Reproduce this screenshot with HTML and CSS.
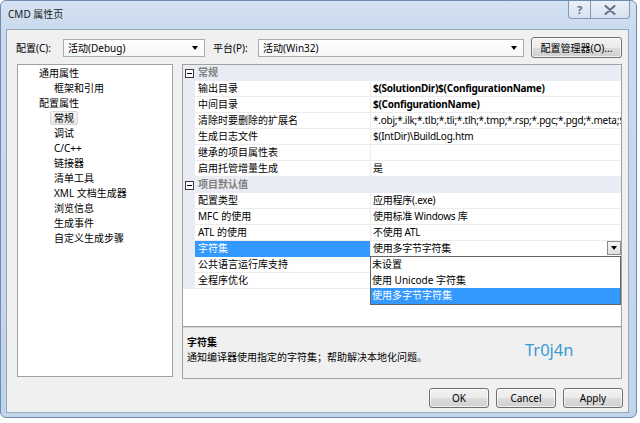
FILE: index.html
```html
<!DOCTYPE html>
<html lang="zh-CN">
<head>
<meta charset="utf-8">
<title>CMD 属性页</title>
<link rel="stylesheet" href="styles.css">
</head>
<body>
<div class="window">
  <div class="titlebar">
    <span class="title">CMD 属性页</span>
    <div class="caption-btns">
      <div class="cap cap-help">?</div>
      <div class="cap cap-close">
        <svg width="12" height="10" viewBox="0 0 12 10"><path d="M1.5 1 L10.5 9 M10.5 1 L1.5 9" stroke="#5f7088" stroke-width="2" fill="none" stroke-linecap="round"/></svg>
      </div>
    </div>
  </div>
  <div class="client">
    <div class="config-row">
      <span class="lbl lbl-cfg">配置(C):</span>
      <div class="combo combo-cfg"><span>活动(Debug)</span><span class="arrow"></span></div>
      <span class="lbl lbl-plat">平台(P):</span>
      <div class="combo combo-plat"><span>活动(Win32)</span><span class="arrow"></span></div>
      <div class="btn btn-mgr">配置管理器(O)...</div>
    </div>
    <div class="main">
      <div class="tree">
        <div class="ti l0">通用属性</div>
        <div class="ti l1">框架和引用</div>
        <div class="ti l0">配置属性</div>
        <div class="ti l1"><span class="tsel">常规</span></div>
        <div class="ti l1">调试</div>
        <div class="ti l1">C/C++</div>
        <div class="ti l1">链接器</div>
        <div class="ti l1">清单工具</div>
        <div class="ti l1">XML 文档生成器</div>
        <div class="ti l1">浏览信息</div>
        <div class="ti l1">生成事件</div>
        <div class="ti l1">自定义生成步骤</div>
      </div>
      <div class="panel">
        <div class="grid">
          <div class="row cat"><span class="gut"><span class="minus"></span></span><span class="cat-label">常规</span></div>
          <div class="row"><span class="gut"></span><span class="name">输出目录</span><span class="val bold">$(SolutionDir)$(ConfigurationName)</span></div>
          <div class="row"><span class="gut"></span><span class="name">中间目录</span><span class="val bold">$(ConfigurationName)</span></div>
          <div class="row"><span class="gut"></span><span class="name">清除时要删除的扩展名</span><span class="val">*.obj;*.ilk;*.tlb;*.tli;*.tlh;*.tmp;*.rsp;*.pgc;*.pgd;*.meta;$(</span></div>
          <div class="row"><span class="gut"></span><span class="name">生成日志文件</span><span class="val">$(IntDir)\BuildLog.htm</span></div>
          <div class="row"><span class="gut"></span><span class="name">继承的项目属性表</span><span class="val"></span></div>
          <div class="row"><span class="gut"></span><span class="name">启用托管增量生成</span><span class="val">是</span></div>
          <div class="row cat"><span class="gut"><span class="minus"></span></span><span class="cat-label">项目默认值</span></div>
          <div class="row"><span class="gut"></span><span class="name">配置类型</span><span class="val">应用程序(.exe)</span></div>
          <div class="row"><span class="gut"></span><span class="name">MFC 的使用</span><span class="val">使用标准 Windows 库</span></div>
          <div class="row"><span class="gut"></span><span class="name">ATL 的使用</span><span class="val">不使用 ATL</span></div>
          <div class="row row-sel"><span class="gut"></span><span class="name">字符集</span><span class="val val-edit"><span>使用多字节字符集</span><span class="dd-btn"><span class="arrow"></span></span></span></div>
          <div class="row"><span class="gut"></span><span class="name">公共语言运行库支持</span><span class="val"></span></div>
          <div class="row"><span class="gut"></span><span class="name">全程序优化</span><span class="val"></span></div>
        </div>
        <div class="desc">
          <div class="desc-title">字符集</div>
          <div class="desc-text">通知编译器使用指定的字符集；帮助解决本地化问题。</div>
          <div class="watermark">Tr0j4n</div>
        </div>
        <div class="dropdown">
          <div class="dd-item">未设置</div>
          <div class="dd-item">使用 Unicode 字符集</div>
          <div class="dd-item dd-sel">使用多字节字符集</div>
        </div>
      </div>
    </div>
    <div class="footer">
      <div class="btn btn-foot">OK</div>
      <div class="btn btn-foot">Cancel</div>
      <div class="btn btn-foot">Apply</div>
    </div>
  </div>
</div>
</body>
</html>
```
FILE: styles.css
```css
* { box-sizing: border-box; }
html, body { margin: 0; padding: 0; background: #ffffff; }
body {
  font-family: "Noto Sans", "Noto Sans CJK SC", sans-serif;
  font-size: 10px;
  color: #000;
  width: 640px;
  height: 423px;
  overflow: hidden;
}

.window {
  width: 637px;
  height: 418px;
  border: 1px solid #6f8bb0;
  border-radius: 6px;
  background: linear-gradient(to bottom, #d4e2f2 0px, #cadbee 28px, #c0d4ea 100%);
  padding: 0 7px 4px 5px;
  display: flex;
  flex-direction: column;
}

.titlebar {
  height: 28px;
  display: flex;
  align-items: flex-start;
}
.title {
  padding-left: 2px;
  line-height: 26px;
  color: #1b1b1b;
}
.caption-btns {
  margin-left: auto;
  margin-right: -1px;
  display: flex;
}
.cap {
  height: 18px;
  border: 1px solid #8398b5;
  border-top: none;
  background: linear-gradient(to bottom, #e9f0f8, #d6e2f1);
  display: flex;
  align-items: center;
  justify-content: center;
}
.cap-help {
  width: 23px;
  border-radius: 0 0 0 4px;
  color: #5f7088;
  font-weight: bold;
  font-size: 11px;
  line-height: 1;
}
.cap-close {
  width: 39px;
  border-left: none;
  border-radius: 0 0 4px 0;
}

.client {
  flex: 1;
  background: #f0f0f0;
  border: 1px solid #95a8c0;
  display: flex;
  flex-direction: column;
}

.config-row {
  margin-top: 7px;
  height: 21px;
  display: flex;
  align-items: center;
  padding-left: 9px;
}
.lbl { line-height: 14px; }
.lbl-cfg { width: 47px; }
.lbl-plat { width: 45px; margin-left: 8px; }
.combo {
  height: 18px;
  border: 1px solid #a9acb2;
  background: linear-gradient(to bottom, #ffffff, #f7f7f7);
  display: flex;
  align-items: center;
  justify-content: space-between;
  padding: 0 6px 0 4px;
}
.combo-cfg { width: 142px; }
.combo-plat { width: 266px; }
.arrow {
  width: 0;
  height: 0;
  border-left: 3.5px solid transparent;
  border-right: 3.5px solid transparent;
  border-top: 4px solid #000;
}
.btn {
  height: 21px;
  border: 1px solid #707070;
  border-radius: 3px;
  background: linear-gradient(to bottom, #f2f2f2 0%, #ebebeb 50%, #dddddd 51%, #cfcfcf 100%);
  display: flex;
  align-items: center;
  justify-content: center;
  box-shadow: inset 0 0 0 1px rgba(255,255,255,0.7);
}
.btn-mgr { width: 91px; margin-left: 7px; }

.main {
  margin-top: 6px;
  padding-left: 10px;
  display: flex;
  align-items: flex-start;
  gap: 9px;
}
.tree {
  width: 156px;
  height: 313px;
  background: #fff;
  border: 1px solid #a0a0a0;
  padding-top: 1px;
}
.ti { height: 15px; line-height: 15px; white-space: nowrap; }
.l0 { padding-left: 21px; }
.l1 { padding-left: 36px; }
.tsel {
  display: inline-block;
  height: 14px;
  line-height: 12px;
  margin-left: -4px;
  padding: 0 3px;
  border: 1px solid #d9d9d9;
  border-radius: 2px;
  background: linear-gradient(to bottom, #f4f4f4, #e6e6e6);
}

.panel {
  position: relative;
  width: 440px;
  height: 315px;
  border: 1px solid #a0a0a0;
  background: #fff;
  display: flex;
  flex-direction: column;
}
.grid {
  height: 262px;
  background: #fff;
  border-bottom: 1px solid #a0a0a0;
}
.row {
  display: grid;
  grid-template-columns: 12px 176px 1fr;
  height: 16px;
}
.row > span { line-height: 15px; white-space: nowrap; overflow: hidden; }
.gut { background: #e9ecf4; display: flex; align-items: center; justify-content: center; }
.name {
  padding-left: 3px;
  border-bottom: 1px solid #ececec;
  border-right: 1px solid #ececec;
}
.val {
  padding-left: 2px;
  border-bottom: 1px solid #ececec;
  letter-spacing: -0.25px;
}
.bold { font-weight: bold; }
.cat { background: #e9ecf4; }
.cat-label {
  grid-column: 2 / 4;
  padding-left: 3px;
  color: #808080;
  font-weight: bold;
}
.minus {
  width: 9px;
  height: 9px;
  border: 1px solid #3c3c3c;
  background: #fff;
  position: relative;
  display: block;
}
.minus::after {
  content: "";
  position: absolute;
  left: 1px;
  top: 3px;
  width: 5px;
  height: 1px;
  background: #000;
}
.row-sel .name { background: #3399ff; color: #fff; border-bottom-color: #3399ff; }
.val-edit { display: flex; justify-content: space-between; align-items: flex-start; }
.dd-btn {
  width: 14px;
  height: 14px;
  border: 1px solid #8a8a8a;
  background: linear-gradient(to bottom, #f6f6f6, #dedede);
  display: flex;
  align-items: center;
  justify-content: center;
}

.desc {
  flex: 1;
  background: #f0f0f0;
  border-top: 1px solid #d6d6d6;
  padding: 7px 4px 0;
  position: relative;
}
.desc-title { font-weight: bold; line-height: 15px; }
.desc-text { line-height: 15px; }
.watermark {
  position: absolute;
  left: 342px;
  top: 12px;
  font-size: 16.5px;
  color: #3a9ad6;
  line-height: 20px;
}

.dropdown {
  position: absolute;
  left: 187px;
  top: 191px;
  width: 251px;
  height: 49px;
  background: #fff;
  border: 1px solid #646464;
}
.dd-item {
  height: 15.5px;
  line-height: 15px;
  padding-left: 1px;
  white-space: nowrap;
}
.dd-sel { background: #3399ff; color: #fff; }

.footer {
  margin-top: 9px;
  padding-right: 5px;
  display: flex;
  justify-content: flex-end;
  gap: 7px;
}
.btn-foot { width: 60px; height: 20px; }
```
